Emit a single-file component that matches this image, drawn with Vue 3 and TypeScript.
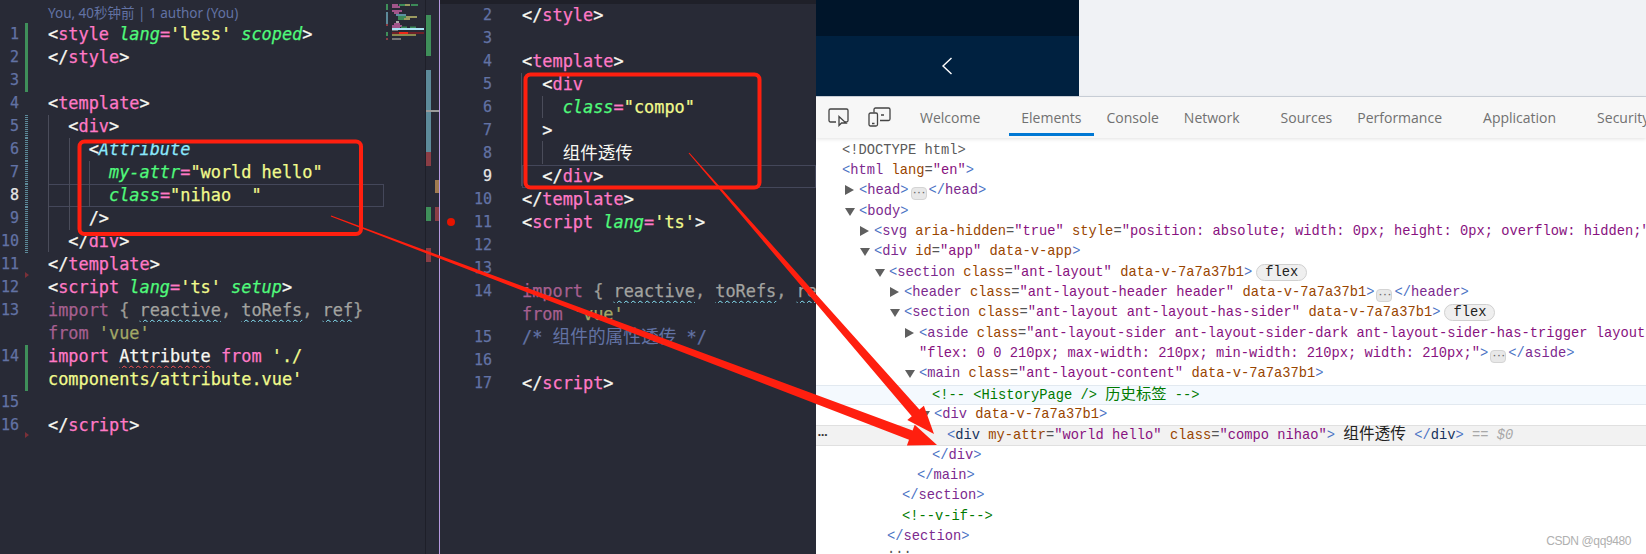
<script setup lang="ts">
type Row = { n?: number; git?: string; on?: boolean; bp?: boolean; t: string[]; cur?: boolean }
type TreeRow = { x: number; tri?: string; kind?: string; t: string[] }

const tk = (s: string) => ({ c: 'tk-' + s[0], s: s.slice(1) })

const leftRows: Row[] = [
  { n: 1, git: 'add', t: ['w<', 'pstyle', 'w ', 'glang', 'p=', "y'less'", 'w ', 'gscoped', 'w>'] },
  { n: 2, git: 'add', t: ['w</', 'pstyle', 'w>'] },
  { n: 3, git: 'add', t: [] },
  { n: 4, t: ['w<', 'ptemplate', 'w>'] },
  { n: 5, git: 'mod', t: ['w  <', 'pdiv', 'w>'] },
  { n: 6, git: 'mod', t: ['w    <', 'cAttribute'] },
  { n: 7, git: 'mod', t: ['w      ', 'gmy-attr', 'p=', 'y"world hello"'] },
  { n: 8, git: 'mod', on: true, cur: true, t: ['w      ', 'gclass', 'p=', 'y"nihao  "'] },
  { n: 9, git: 'mod', t: ['w    />'] },
  { n: 10, git: 'mod', t: ['w  </', 'pdiv', 'w>'] },
  { n: 11, t: ['w</', 'ptemplate', 'w>'] },
  { n: 12, t: ['w<', 'pscript', 'w ', 'glang', 'p=', "y'ts'", 'w ', 'gsetup', 'w>'] },
  { n: 13, t: ['dimport', 'e { ', 'ureactive', 'e, ', 'utoRefs', 'e, ', 'uref', 'e}'] },
  { t: ['dfrom', 'e ', "l'vue'"] },
  { n: 14, git: 'add', t: ['pimport', 'w ', 'rAttribute', 'w ', 'pfrom', 'w ', "y'./"] },
  { git: 'add', t: ["ycomponents/attribute.vue'"] },
  { n: 15, t: [] },
  { n: 16, t: ['w</', 'pscript', 'w>'] }
]

const midRows: Row[] = [
  { n: 2, t: ['w</', 'pstyle', 'w>'] },
  { n: 3, t: [] },
  { n: 4, t: ['w<', 'ptemplate', 'w>'] },
  { n: 5, t: ['w  <', 'pdiv'] },
  { n: 6, t: ['w    ', 'gclass', 'p=', 'y"compo"'] },
  { n: 7, t: ['w  >'] },
  { n: 8, t: ['w    ', 'h组件透传'] },
  { n: 9, on: true, cur: true, t: ['w  </', 'pdiv', 'w>'] },
  { n: 10, t: ['w</', 'ptemplate', 'w>'] },
  { n: 11, bp: true, t: ['w<', 'pscript', 'w ', 'glang', 'p=', "y'ts'", 'w>'] },
  { n: 12, t: [] },
  { n: 13, t: [] },
  { n: 14, t: ['dimport', 'e { ', 'ureactive', 'e, ', 'utoRefs', 'e, ', 'uref'] },
  { t: ['dfrom', 'e ', "l'vue'"] },
  { n: 15, t: ['m/* ', 'n组件的属性透传', 'm */'] },
  { n: 16, t: [] },
  { n: 17, t: ['w</', 'pscript', 'w>'] }
]

const tree: TreeRow[] = [
  { x: 26, t: ['d<!DOCTYPE html>'] },
  { x: 26, t: ['b<', 'thtml', 'e ', 'alang', 'e=', 'v"en"', 'b>'] },
  { x: 43, tri: 'r', t: ['b<', 'thead', 'b>', 'o···', 'b</', 'thead', 'b>'] },
  { x: 43, tri: 'd', t: ['b<', 'tbody', 'b>'] },
  { x: 58, tri: 'r', t: ['b<', 'tsvg', 'e ', 'aaria-hidden', 'e=', 'v"true"', 'e ', 'astyle', 'e=', 'v"position: absolute; width: 0px; height: 0px; overflow: hidden;"'] },
  { x: 58, tri: 'd', t: ['b<', 'tdiv', 'e ', 'aid', 'e=', 'v"app"', 'e ', 'adata-v-app', 'b>'] },
  { x: 73, tri: 'd', t: ['b<', 'tsection', 'e ', 'aclass', 'e=', 'v"ant-layout"', 'e ', 'adata-v-7a7a37b1', 'b>', 'pflex'] },
  { x: 88, tri: 'r', t: ['b<', 'theader', 'e ', 'aclass', 'e=', 'v"ant-layout-header header"', 'e ', 'adata-v-7a7a37b1', 'b>', 'o···', 'b</', 'theader', 'b>'] },
  { x: 88, tri: 'd', t: ['b<', 'tsection', 'e ', 'aclass', 'e=', 'v"ant-layout ant-layout-has-sider"', 'e ', 'adata-v-7a7a37b1', 'b>', 'pflex'] },
  { x: 103, tri: 'r', t: ['b<', 'taside', 'e ', 'aclass', 'e=', 'v"ant-layout-sider ant-layout-sider-dark ant-layout-sider-has-trigger layout-sider"'] },
  { x: 103, t: ['v"flex: 0 0 210px; max-width: 210px; min-width: 210px; width: 210px;"', 'b>', 'o···', 'b</', 'taside', 'b>'] },
  { x: 103, tri: 'd', t: ['b<', 'tmain', 'e ', 'aclass', 'e=', 'v"ant-layout-content"', 'e ', 'adata-v-7a7a37b1', 'b>'] },
  { x: 116, kind: 'hover', t: ['c<!-- <HistoryPage /> ', 'k历史标签', 'c -->'] },
  { x: 118, tri: 'd', t: ['b<', 'tdiv', 'e ', 'adata-v-7a7a37b1', 'b>'] },
  { x: 131, kind: 'sel', t: ['b<', 'ndiv', 'e ', 'amy-attr', 'e=', 'v"world hello"', 'e ', 'aclass', 'e=', 'v"compo nihao"', 'b>', 'x ', 'j组件透传', 'x ', 'b</', 'ndiv', 'b>', 'z == ', 'q$0'] },
  { x: 116, t: ['b</', 'tdiv', 'b>'] },
  { x: 101, t: ['b</', 'tmain', 'b>'] },
  { x: 86, t: ['b</', 'tsection', 'b>'] },
  { x: 86, t: ['c<!--v-if-->'] },
  { x: 71, t: ['b</', 'tsection', 'b>'] }
]

const tabs = [
  { name: 'Welcome', wide: false },
  { name: 'Elements', wide: true, active: true },
  { name: 'Console', wide: false },
  { name: 'Network', wide: false },
  { name: 'Sources', wide: true },
  { name: 'Performance', wide: false },
  { name: 'Application', wide: true },
  { name: 'Security', wide: true }
]

const mini: [number, number, number, number, string][] = [
  [392, 4, 6, 2, '#a0558a'], [399, 4, 6, 2, '#3c8a58'], [405, 4, 5, 2, '#9a9a60'], [411, 4, 7, 2, '#3c8a58'],
  [392, 6, 8, 2, '#a0558a'], [392, 10, 10, 2, '#a0558a'], [394, 12, 5, 2, '#a0558a'],
  [396, 14, 10, 2, '#5a90a0'], [398, 16, 8, 2, '#3c8a58'], [406, 16, 11, 2, '#9a9a60'], [398, 18, 6, 2, '#3c8a58'], [404, 18, 6, 2, '#9a9a60'],
  [396, 21, 3, 2, '#aaa'], [394, 23, 6, 2, '#a0558a'], [392, 25, 10, 2, '#a0558a'],
  [392, 26.5, 8, 2, '#a0558a'], [401, 26.5, 6, 2, '#3c8a58'], [410, 26.5, 6, 2, '#3c8a58'],
  [392, 28, 32, 2, '#a9e4f5'], [392, 30, 6, 1, '#777'], [392, 32, 32, 2, '#6e2028'], [399, 32, 9, 2, '#f02818'],
  [392, 34, 24, 2, '#8a8a50'], [392, 38, 9, 2, '#777']
]

const ruler: [number, number, number, number, string][] = [
  [426, 15, 5, 41, '#3f8f5a'], [426, 70, 5, 82, '#5d8a9a'], [426, 110, 13, 2, '#9a9a9a'], [426, 152, 5, 14, '#8a3d45'],
  [435, 180, 4, 13, '#a07a50'], [426, 207, 5, 14, '#3f8f5a'], [435, 207, 4, 14, '#8a3d45'], [426, 248, 5, 14, '#8a3d45'],
  [386, 4, 2, 6, '#3f8f5a'], [386, 12, 2, 12, '#5d8a9a'], [386, 24, 2, 2, '#8a3d45'], [386, 32, 2, 4, '#3f8f5a'], [386, 38, 2, 2, '#8a3d45']
]

function arrow(x1: number, y1: number, x2: number, y2: number, w1: number, w2: number, hl: number, hw: number): string {
  const len = Math.hypot(x2 - x1, y2 - y1)
  const ux = (x2 - x1) / len
  const uy = (y2 - y1) / len
  const nx = -uy
  const ny = ux
  const bx = x2 - ux * hl
  const by = y2 - uy * hl
  const pts: [number, number][] = [
    [x1 + (nx * w1) / 2, y1 + (ny * w1) / 2],
    [bx + (nx * w2) / 2, by + (ny * w2) / 2],
    [bx + (nx * hw) / 2, by + (ny * hw) / 2],
    [x2, y2],
    [bx - (nx * hw) / 2, by - (ny * hw) / 2],
    [bx - (nx * w2) / 2, by - (ny * w2) / 2],
    [x1 - (nx * w1) / 2, y1 - (ny * w1) / 2]
  ]
  return pts.map((p) => p[0].toFixed(1) + ',' + p[1].toFixed(1)).join(' ')
}

const arrowA = arrow(331, 216, 937, 445, 1, 10, 28, 22)
const arrowB = arrow(689, 153, 934, 434, 1, 10, 28, 22)
</script>

<template>
  <div class="screen">
    <section class="pane pane-left">
      <div class="lens">You, 40秒钟前 | 1 author (You)</div>
      <div v-for="(r, i) in leftRows" :key="i" class="line">
        <span class="num" :class="{ on: r.on }">{{ r.n }}</span>
        <span class="gutter"><i v-if="r.git" class="git" :class="r.git"></i></span>
        <span class="code" :class="{ cur: r.cur }"><span v-for="(p, j) in r.t" :key="j" :class="tk(p).c">{{ tk(p).s }}</span></span>
      </div>
      <svg class="overlay" width="439" height="554">
        <path d="M48.5 115V252M69.5 138V230M89.5 161V207" stroke="#4a4c5a" stroke-width="1" fill="none" />
        <path d="M25 272l4 3-4 3zM25 432l4 3-4 3z" fill="#7a3038" />
        <path d="M425.5 0V554" stroke="#1e1f29" stroke-width="1" />
        <rect v-for="(m, i) in mini" :key="'m' + i" :x="m[0]" :y="m[1]" :width="m[2]" :height="m[3]" :fill="m[4]" />
        <rect v-for="(m, i) in ruler" :key="'r' + i" :x="m[0]" :y="m[1]" :width="m[2]" :height="m[3]" :fill="m[4]" />
      </svg>
    </section>
    <div class="split"></div>
    <section class="pane pane-mid">
      <div v-for="(r, i) in midRows" :key="i" class="line">
        <span class="num num-mid" :class="{ on: r.on }"><i v-if="r.bp" class="bp"></i>{{ r.n }}</span>
        <span class="code code-mid" :class="{ cur: r.cur }"><span v-for="(p, j) in r.t" :key="j" :class="tk(p).c">{{ tk(p).s }}</span></span>
      </div>
      <svg class="overlay" width="375" height="554">
        <path d="M81.5 73V118M102.5 96V118M102.5 141V164M81.5 118V186" stroke="#4a4c5a" stroke-width="1" fill="none" />
      </svg>
    </section>
    <section class="browser">
      <div class="page">
        <div class="sider">
          <div class="sider-top"></div>
          <div class="trigger">
            <svg width="12" height="18" viewBox="0 0 12 18"><path d="M10.5 1L2 9l8.5 8" fill="none" stroke="#fff" stroke-width="1.4" /></svg>
          </div>
        </div>
        <div class="content"></div>
      </div>
      <div class="devtools">
        <div class="toolbar">
          <svg class="tool" width="22" height="20" viewBox="0 0 22 20" fill="none" stroke="#444" stroke-width="1.3">
            <path d="M8 15H2.5A1.5 1.5 0 0 1 1 13.5V3.5A1.5 1.5 0 0 1 2.5 2h16A1.5 1.5 0 0 1 20 3.5V13.5a1.5 1.5 0 0 1-1.5 1.5H17" />
            <path d="M11 9.5v9l2.5-2.5h4.5z" />
          </svg>
          <svg class="tool tool-b" width="23" height="20" viewBox="0 0 23 20" fill="none" stroke="#444" stroke-width="1.3">
            <path d="M6 5.5V2.5A1.5 1.5 0 0 1 7.500 1h13A1.500 1.500 0 0 1 22 2.500V12a1.500 1.500 0 0 1-1.500 1.500H12" />
            <rect x="1" y="6" width="8.500" height="13" rx="1.500" />
            <path d="M4 16.500h2.500M13 8h3" />
          </svg>
          <nav class="tabs">
            <span v-for="tab in tabs" :key="tab.name" class="tab" :class="{ wide: tab.wide, active: tab.active }">{{ tab.name }}</span>
          </nav>
        </div>
        <div class="tree">
          <div v-for="(r, i) in tree" :key="i" class="row" :class="r.kind" :style="{ paddingLeft: r.x + 'px' }">
            <span v-if="r.kind === 'sel'" class="dots">•••</span>
            <i v-if="r.tri" class="tri" :class="r.tri"></i>
            <span v-for="(p, j) in r.t" :key="j" :class="'t' + tk(p).c">{{ tk(p).s }}</span>
          </div>
          <div class="row cut">···</div>
        </div>
      </div>
    </section>
    <svg class="marks" width="1646" height="554">
      <rect x="79.500" y="141.500" width="281.500" height="92.500" rx="5" fill="none" stroke="#ff1f0f" stroke-width="4" />
      <rect x="525.500" y="74.500" width="234" height="113" rx="5" fill="none" stroke="#ff1f0f" stroke-width="4" />
      <polygon :points="arrowA" fill="#ff1f0f" />
      <polygon :points="arrowB" fill="#ff1f0f" />
    </svg>
    <div class="stamp">CSDN @qq9480</div>
  </div>
</template>

<style>
html,
body {
  margin: 0;
  background: #282a36;
}
</style>

<style scoped>
.screen {
  position: relative;
  display: flex;
  width: 1646px;
  height: 554px;
  overflow: hidden;
  font-family: "DejaVu Sans Mono", "Noto Sans CJK SC", monospace;
}
.pane {
  position: relative;
  box-sizing: border-box;
  height: 554px;
  overflow: hidden;
  background: #282a36;
  color: #f8f8f2;
  font-size: 16.9px;
  -webkit-text-stroke: 0.25px;
}
.pane-left {
  width: 439px;
  padding-top: 4px;
}
.split {
  width: 1px;
  background: #b79ae0;
}
.pane-mid {
  width: 376px;
  padding-top: 3.5px;
  background: linear-gradient(#1f2029 0 4px, #282a36 4px);
}
.lens {
  height: 19px;
  padding-left: 48px;
  font-family: "Noto Sans", "Noto Sans CJK SC", sans-serif;
  font-size: 13.5px;
  line-height: 19px;
  color: #6272a4;
  -webkit-text-stroke: 0;
}
.line {
  display: flex;
  height: 23px;
  line-height: 23px;
  white-space: pre;
}
.num {
  position: relative;
  flex: none;
  width: 19px;
  font-size: 15px;
  text-align: right;
  color: #6272a4;
}
.num.on {
  color: #e6e6e6;
}
.num-mid {
  width: 52px;
  margin-right: 30px;
}
.bp {
  position: absolute;
  left: 7px;
  top: 7.500px;
  width: 8px;
  height: 8px;
  border-radius: 50%;
  background: #e51400;
}
.gutter {
  flex: none;
  width: 29px;
}
.git {
  display: block;
  width: 3px;
  height: 23px;
  margin-left: 6px;
}
.git.add {
  background: #3f8f5a;
}
.git.mod {
  background: repeating-linear-gradient(#5d8a9a 0 1px, #282a36 1px 2px);
}
.code {
  flex: none;
  box-sizing: border-box;
  width: 336px;
  overflow: hidden;
}
.code-mid {
  width: 294px;
}
.cur {
  box-shadow: inset 0 0 0 1px #44475a;
}
.tk-w { color: #f8f8f2; }
.tk-p { color: #ff79c6; }
.tk-g { color: #50fa7b; font-style: italic; }
.tk-y { color: #f1fa8c; }
.tk-c { color: #8be9fd; font-style: italic; }
.tk-d { color: #a65f8f; }
.tk-e { color: #9c9c98; }
.tk-l { color: #a3a866; }
.tk-u {
  color: #a3a3a0;
  text-decoration: underline wavy #8be9fd 1px;
  text-underline-offset: 3px;
}
.tk-r {
  color: #f8f8f2;
  text-decoration: underline wavy #ff5555 1px;
  text-underline-offset: 3px;
}
.tk-h {
  color: #f8f8f2;
  font-size: 17.500px;
  -webkit-text-stroke: 0;
}
.tk-m { color: #6272a4; }
.tk-n {
  color: #6272a4;
  font-size: 17.700px;
  -webkit-text-stroke: 0;
}
.overlay {
  position: absolute;
  left: 0;
  top: 0;
  pointer-events: none;
}
.browser {
  display: flex;
  flex: 1;
  flex-direction: column;
  min-width: 0;
  background: #fff;
}
.page {
  display: flex;
  flex: none;
  height: 96px;
}
.sider {
  display: flex;
  flex-direction: column;
  width: 263px;
  background: #002140;
}
.sider-top {
  height: 36px;
  background: #00152a;
}
.trigger {
  display: flex;
  flex: 1;
  align-items: center;
  justify-content: center;
  padding-right: 2px;
}
.content {
  flex: 1;
  background: #f0f2f5;
}
.devtools {
  flex: 1;
  min-height: 0;
  border-top: 1px solid #cdd3dc;
}
.toolbar {
  position: relative;
  z-index: 1;
  display: flex;
  align-items: center;
  height: 41px;
  padding-left: 12px;
  background: #f7f7f7;
  box-shadow: 0 1px 4px rgba(0, 0, 0, 0.12);
}
.tool {
  flex: none;
  margin-top: -2px;
}
.tool-b {
  margin-left: 18px;
}
.tabs {
  display: flex;
  align-self: stretch;
  margin-left: 16.500px;
  font-family: "Open Sans", sans-serif;
  font-size: 14px;
  color: #717171;
  white-space: nowrap;
}
.tab {
  box-sizing: border-box;
  display: flex;
  align-items: center;
  height: 39px;
  padding: 2px 12.500px 0;
}
.tab.wide {
  margin-left: 16px;
}
.tab.active {
  border-bottom: 3px solid #0078d4;
  padding-top: 5px;
}
.tree {
  padding-top: 2.500px;
  font-family: "Liberation Mono", "Noto Sans CJK SC", monospace;
  font-size: 13.750px;
  color: #222;
}
.row {
  position: relative;
  box-sizing: border-box;
  height: 20.350px;
  line-height: 20.350px;
  white-space: pre;
  overflow: hidden;
}
.row.hover {
  background: #f4f9fe;
  box-shadow: inset 0 1px 0 #e2e9f0, inset 0 -1px 0 #e2e9f0;
}
.row.sel {
  background: #f2f2f2;
  box-shadow: inset 0 1px 0 #e0e0e0, inset 0 -1px 0 #e0e0e0;
}
.dots {
  position: absolute;
  left: 2px;
  top: 0;
  font-family: "Liberation Sans", sans-serif;
  font-size: 8px;
  letter-spacing: 0.500px;
  color: #333;
}
.row.cut {
  padding-left: 71px;
  line-height: 12px;
  color: #555;
}
.tri {
  display: inline-block;
  width: 0;
  height: 0;
  margin-left: -14px;
  margin-right: 4px;
  vertical-align: -1px;
}
.tri.r {
  border-left: 9px solid #5f5f5f;
  border-top: 5px solid transparent;
  border-bottom: 5px solid transparent;
  margin-right: 5px;
}
.tri.d {
  border-top: 8px solid #5f5f5f;
  border-left: 5px solid transparent;
  border-right: 5px solid transparent;
}
.ttk-b { color: #4a72c4; }
.ttk-t { color: #7c2a8e; }
.ttk-n { color: #16325c; }
.ttk-a { color: #994500; }
.ttk-e { color: #555; }
.ttk-v { color: #881280; }
.ttk-d { color: #5a5a5a; }
.ttk-c { color: #007a00; }
.ttk-x { color: #222; }
.ttk-j {
  color: #222;
  font-size: 15.700px;
}
.ttk-k {
  color: #007a00;
  font-size: 15.300px;
}
.ttk-z {
  color: #a8a8a8;
}
.ttk-q {
  color: #a8a8a8;
  font-style: italic;
}
.ttk-o {
  display: inline-block;
  box-sizing: border-box;
  width: 16px;
  height: 13px;
  margin: 0 2px;
  border: 1px solid #d4d4d4;
  border-radius: 4px;
  background: #e8e8e8;
  font-size: 9px;
  font-weight: 700;
  line-height: 10px;
  text-align: center;
  letter-spacing: -1px;
  color: #666;
  vertical-align: -1px;
}
.ttk-p {
  display: inline-block;
  box-sizing: border-box;
  height: 17px;
  margin-left: 4px;
  padding: 0 8px;
  border: 1px solid #d0d0d0;
  border-radius: 9px;
  background: #efefef;
  line-height: 15px;
  color: #222;
  vertical-align: 0;
}
.stamp {
  position: absolute;
  right: 15px;
  bottom: 6px;
  font-family: "Liberation Sans", sans-serif;
  font-size: 12px;
  letter-spacing: -0.400px;
  color: #b0b0b0;
}
.marks {
  position: absolute;
  left: 0;
  top: 0;
  pointer-events: none;
}
</style>
